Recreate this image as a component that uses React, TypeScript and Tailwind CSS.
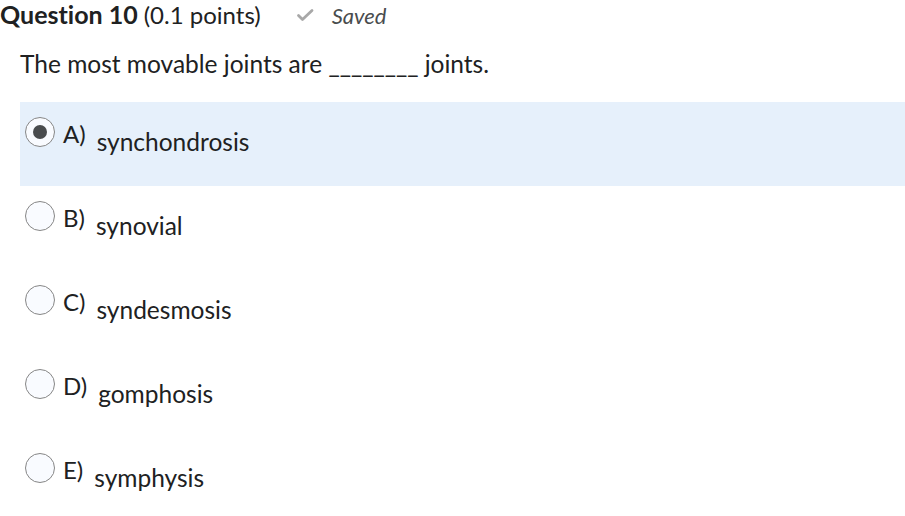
import React from "react";

const options = [
  { letter: "A)", text: "synchondrosis", selected: true },
  { letter: "B)", text: "synovial", selected: false },
  { letter: "C)", text: "syndesmosis", selected: false },
  { letter: "D)", text: "gomphosis", selected: false },
  { letter: "E)", text: "symphysis", selected: false },
];

const Radio = ({ checked }: { checked: boolean }) => (
  <div className="w-[30px] h-[30px] rounded-full border border-[#868686] bg-[#f9fbff] flex items-center justify-center shrink-0">
    {checked && <div className="w-[14px] h-[14px] rounded-full bg-[#494c4e]" />}
  </div>
);

const App = () => {
  return (
    <div className="w-[905px] h-[516px] bg-white text-[#202122] overflow-hidden font-['Lato',sans-serif] [font-variant-ligatures:none]">
      <div className="flex items-center h-[30px]">
        <span className="text-[25px] font-bold">Question 10</span>
        <span className="text-[24px] ml-[6px]">(0.1 points)</span>
        <svg className="ml-[35px]" width="18" height="14" viewBox="0 0 18 14">
          <path d="M2.5 7.5 L6.5 11.5 L16 2.5" fill="none" stroke="#a8a8a8" strokeWidth="2.8" strokeLinecap="round" strokeLinejoin="round" />
        </svg>
        <span className="ml-[18px] italic text-[22px] text-[#494c4e]">Saved</span>
      </div>
      <div className="pl-[20px] pt-[18px] h-[72px] text-[24.5px] leading-[32px]">
        The most movable joints are ________ joints.
      </div>
      <div className="pl-[20px]">
        {options.map((o) => (
          <div
            key={o.letter}
            className={`h-[84px] pl-[5px] pt-[15px] flex items-start ${o.selected ? "bg-[#e6f0fb]" : ""}`}
          >
            <Radio checked={o.selected} />
            <span className="ml-[8px] mt-[2px] text-[24px] leading-[30px]">{o.letter}</span>
            <span className="ml-[11px] mt-[10px] text-[24.5px] leading-[30px]">{o.text}</span>
          </div>
        ))}
      </div>
    </div>
  );
};

export default App;
